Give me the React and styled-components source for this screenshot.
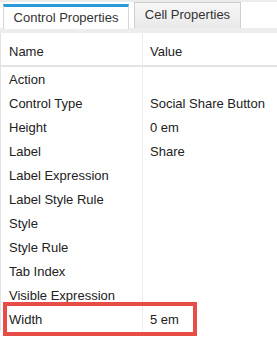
import React from 'react'
import styled, { createGlobalStyle } from 'styled-components'

const GlobalStyle = createGlobalStyle`
  html, body {
    margin: 0;
    padding: 0;
    background: #fff;
  }
  body {
    font-family: "Liberation Sans", Arial, sans-serif;
    font-size: 13px;
    color: #222;
  }
`

const Panel = styled.div`
  width: 277px;
  height: 337px;
  overflow: hidden;
  background: #fff;
`

const TabBar = styled.div`
  display: flex;
  align-items: flex-end;
  gap: 5px;
  height: 26px;
  padding-left: 3px;
  border-top: 2px solid #ececec;
  background: #fff;
`

const Tab = styled.div`
  box-sizing: border-box;
  display: flex;
  align-items: center;
  justify-content: center;
  color: #333;
  ${p => p.$active ? `
    width: 126px;
    height: 25px;
    padding-bottom: 1px;
    background: #fff;
    border-top: 3px solid #2b9ad8;
    border-left: 1px solid #d8d8d8;
    border-right: 1px solid #d8d8d8;
    margin-bottom: -1px;
    position: relative;
  ` : `
    width: 107px;
    height: 26px;
    padding-bottom: 2px;
    background: linear-gradient(#f7f7f7, #e9e9e9);
    border: 1px solid #cfcfcf;
    border-bottom: none;
  `}
`

const Band = styled.div`
  height: 5px;
  background: #ededed;
`

const Table = styled.div`
  border-left: 1px solid #e2e2e2;
`

const Row = styled.div`
  position: relative;
  display: grid;
  grid-template-columns: 142px 1fr;
  height: ${p => p.$header ? '34px' : '24px'};
  border-bottom: ${p => p.$header ? '2px solid #e4e4e4' : 'none'};
  box-sizing: border-box;
`

const Cell = styled.div`
  display: flex;
  align-items: center;
  white-space: nowrap;
  padding-left: ${p => p.$value ? '7px' : '8px'};
  padding-top: ${p => p.$header ? '4px' : '0'};
  border-right: ${p => p.$value ? 'none' : '1px solid #ebebeb'};
`

const Highlight = styled.div`
  position: absolute;
  left: 2px;
  top: -5px;
  width: 194px;
  height: 34px;
  box-sizing: border-box;
  border: 4px solid #e84c47;
  pointer-events: none;
`

const rows = [
  ['Action', ''],
  ['Control Type', 'Social Share Button'],
  ['Height', '0 em'],
  ['Label', 'Share'],
  ['Label Expression', ''],
  ['Label Style Rule', ''],
  ['Style', ''],
  ['Style Rule', ''],
  ['Tab Index', ''],
  ['Visible Expression', ''],
  ['Width', '5 em'],
]

export default function App() {
  return (
    <Panel>
      <GlobalStyle />
      <TabBar>
        <Tab $active>Control Properties</Tab>
        <Tab>Cell Properties</Tab>
      </TabBar>
      <Band />
      <Table>
        <Row $header>
          <Cell $header>Name</Cell>
          <Cell $header $value>Value</Cell>
        </Row>
        {rows.map(([name, value]) => (
          <Row key={name}>
            <Cell>{name}</Cell>
            <Cell $value>{value}</Cell>
            {name === 'Width' && <Highlight />}
          </Row>
        ))}
      </Table>
    </Panel>
  )
}
